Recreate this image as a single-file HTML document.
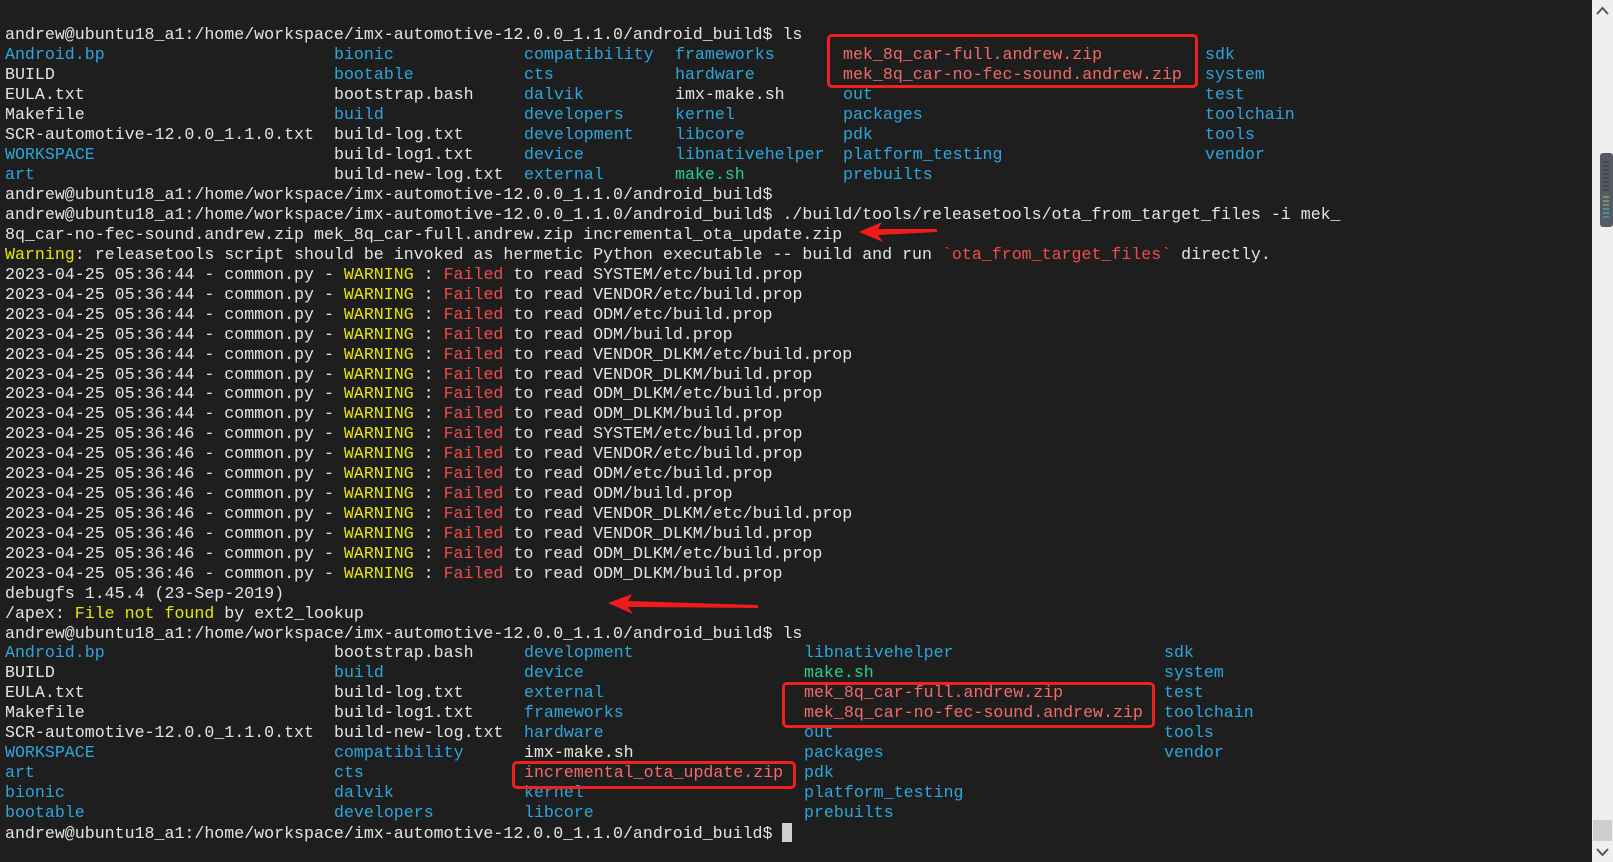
<!DOCTYPE html>
<html><head><meta charset="utf-8"><style>
html,body{margin:0;padding:0;}
body{width:1613px;height:862px;background:#1e1e1e;position:relative;overflow:hidden;font-family:"Liberation Mono",monospace;font-size:16.62px;color:#e4e4e4;}
.l{position:absolute;left:5px;height:20px;line-height:20px;white-space:pre;}
.s{position:absolute;top:0;white-space:pre;}
.b{color:#2ca6dc}.g{color:#23d18b}.y{color:#e5e510}.r{color:#f14c4c}.z{color:#f26b6b}
.box{position:absolute;border:3px solid #f02020;border-radius:5px;box-sizing:border-box;}
#sb{position:absolute;left:1592px;top:0;width:21px;height:862px;background:#efefef;}
</style></head><body>
<div class="l" style="top:25px">andrew@ubuntu18_a1:/home/workspace/imx-automotive-12.0.0_1.1.0/android_build$ ls</div>

<div class="l" style="top:45px;left:0;width:1590px"><span class="s b" style="left:5px">Android.bp</span><span class="s b" style="left:334px">bionic</span><span class="s b" style="left:524px">compatibility</span><span class="s b" style="left:675px">frameworks</span><span class="s z" style="left:843px">mek_8q_car-full.andrew.zip</span><span class="s b" style="left:1205px">sdk</span></div>
<div class="l" style="top:65px;left:0;width:1590px"><span class="s" style="left:5px">BUILD</span><span class="s b" style="left:334px">bootable</span><span class="s b" style="left:524px">cts</span><span class="s b" style="left:675px">hardware</span><span class="s z" style="left:843px">mek_8q_car-no-fec-sound.andrew.zip</span><span class="s b" style="left:1205px">system</span></div>
<div class="l" style="top:85px;left:0;width:1590px"><span class="s" style="left:5px">EULA.txt</span><span class="s" style="left:334px">bootstrap.bash</span><span class="s b" style="left:524px">dalvik</span><span class="s" style="left:675px">imx-make.sh</span><span class="s b" style="left:843px">out</span><span class="s b" style="left:1205px">test</span></div>
<div class="l" style="top:105px;left:0;width:1590px"><span class="s" style="left:5px">Makefile</span><span class="s b" style="left:334px">build</span><span class="s b" style="left:524px">developers</span><span class="s b" style="left:675px">kernel</span><span class="s b" style="left:843px">packages</span><span class="s b" style="left:1205px">toolchain</span></div>
<div class="l" style="top:125px;left:0;width:1590px"><span class="s" style="left:5px">SCR-automotive-12.0.0_1.1.0.txt</span><span class="s" style="left:334px">build-log.txt</span><span class="s b" style="left:524px">development</span><span class="s b" style="left:675px">libcore</span><span class="s b" style="left:843px">pdk</span><span class="s b" style="left:1205px">tools</span></div>
<div class="l" style="top:145px;left:0;width:1590px"><span class="s b" style="left:5px">WORKSPACE</span><span class="s" style="left:334px">build-log1.txt</span><span class="s b" style="left:524px">device</span><span class="s b" style="left:675px">libnativehelper</span><span class="s b" style="left:843px">platform_testing</span><span class="s b" style="left:1205px">vendor</span></div>
<div class="l" style="top:165px;left:0;width:1590px"><span class="s b" style="left:5px">art</span><span class="s" style="left:334px">build-new-log.txt</span><span class="s b" style="left:524px">external</span><span class="s g" style="left:675px">make.sh</span><span class="s b" style="left:843px">prebuilts</span></div>

<div class="l" style="top:185px">andrew@ubuntu18_a1:/home/workspace/imx-automotive-12.0.0_1.1.0/android_build$</div>
<div class="l" style="top:205px">andrew@ubuntu18_a1:/home/workspace/imx-automotive-12.0.0_1.1.0/android_build$ ./build/tools/releasetools/ota_from_target_files -i mek_</div>
<div class="l" style="top:225px">8q_car-no-fec-sound.andrew.zip mek_8q_car-full.andrew.zip incremental_ota_update.zip</div>
<div class="l" style="top:245px"><span class="y">Warning</span>: releasetools script should be invoked as hermetic Python executable -- build and run <span class="r">`ota_from_target_files`</span> directly.</div>
<div class="l" style="top:264.5px">2023-04-25 05:36:44 - common.py - <span class="y">WARNING</span> : <span class="r">Failed</span> to read SYSTEM/etc/build.prop</div>
<div class="l" style="top:284.5px">2023-04-25 05:36:44 - common.py - <span class="y">WARNING</span> : <span class="r">Failed</span> to read VENDOR/etc/build.prop</div>
<div class="l" style="top:304.5px">2023-04-25 05:36:44 - common.py - <span class="y">WARNING</span> : <span class="r">Failed</span> to read ODM/etc/build.prop</div>
<div class="l" style="top:324.5px">2023-04-25 05:36:44 - common.py - <span class="y">WARNING</span> : <span class="r">Failed</span> to read ODM/build.prop</div>
<div class="l" style="top:344.5px">2023-04-25 05:36:44 - common.py - <span class="y">WARNING</span> : <span class="r">Failed</span> to read VENDOR_DLKM/etc/build.prop</div>
<div class="l" style="top:364.5px">2023-04-25 05:36:44 - common.py - <span class="y">WARNING</span> : <span class="r">Failed</span> to read VENDOR_DLKM/build.prop</div>
<div class="l" style="top:384px">2023-04-25 05:36:44 - common.py - <span class="y">WARNING</span> : <span class="r">Failed</span> to read ODM_DLKM/etc/build.prop</div>
<div class="l" style="top:404px">2023-04-25 05:36:44 - common.py - <span class="y">WARNING</span> : <span class="r">Failed</span> to read ODM_DLKM/build.prop</div>
<div class="l" style="top:424px">2023-04-25 05:36:46 - common.py - <span class="y">WARNING</span> : <span class="r">Failed</span> to read SYSTEM/etc/build.prop</div>
<div class="l" style="top:444px">2023-04-25 05:36:46 - common.py - <span class="y">WARNING</span> : <span class="r">Failed</span> to read VENDOR/etc/build.prop</div>
<div class="l" style="top:464px">2023-04-25 05:36:46 - common.py - <span class="y">WARNING</span> : <span class="r">Failed</span> to read ODM/etc/build.prop</div>
<div class="l" style="top:484px">2023-04-25 05:36:46 - common.py - <span class="y">WARNING</span> : <span class="r">Failed</span> to read ODM/build.prop</div>
<div class="l" style="top:503.5px">2023-04-25 05:36:46 - common.py - <span class="y">WARNING</span> : <span class="r">Failed</span> to read VENDOR_DLKM/etc/build.prop</div>
<div class="l" style="top:523.5px">2023-04-25 05:36:46 - common.py - <span class="y">WARNING</span> : <span class="r">Failed</span> to read VENDOR_DLKM/build.prop</div>
<div class="l" style="top:543.5px">2023-04-25 05:36:46 - common.py - <span class="y">WARNING</span> : <span class="r">Failed</span> to read ODM_DLKM/etc/build.prop</div>
<div class="l" style="top:563.5px">2023-04-25 05:36:46 - common.py - <span class="y">WARNING</span> : <span class="r">Failed</span> to read ODM_DLKM/build.prop</div>
<div class="l" style="top:583.5px">debugfs 1.45.4 (23-Sep-2019)</div>
<div class="l" style="top:603.5px">/apex: <span class="y">File not found</span> by ext2_lookup</div>
<div class="l" style="top:623.5px">andrew@ubuntu18_a1:/home/workspace/imx-automotive-12.0.0_1.1.0/android_build$ ls</div>

<div class="l" style="top:643px;left:0;width:1590px"><span class="s b" style="left:5px">Android.bp</span><span class="s" style="left:334px">bootstrap.bash</span><span class="s b" style="left:524px">development</span><span class="s b" style="left:804px">libnativehelper</span><span class="s b" style="left:1164px">sdk</span></div>
<div class="l" style="top:663px;left:0;width:1590px"><span class="s" style="left:5px">BUILD</span><span class="s b" style="left:334px">build</span><span class="s b" style="left:524px">device</span><span class="s g" style="left:804px">make.sh</span><span class="s b" style="left:1164px">system</span></div>
<div class="l" style="top:683px;left:0;width:1590px"><span class="s" style="left:5px">EULA.txt</span><span class="s" style="left:334px">build-log.txt</span><span class="s b" style="left:524px">external</span><span class="s z" style="left:804px">mek_8q_car-full.andrew.zip</span><span class="s b" style="left:1164px">test</span></div>
<div class="l" style="top:703px;left:0;width:1590px"><span class="s" style="left:5px">Makefile</span><span class="s" style="left:334px">build-log1.txt</span><span class="s b" style="left:524px">frameworks</span><span class="s z" style="left:804px">mek_8q_car-no-fec-sound.andrew.zip</span><span class="s b" style="left:1164px">toolchain</span></div>
<div class="l" style="top:723px;left:0;width:1590px"><span class="s" style="left:5px">SCR-automotive-12.0.0_1.1.0.txt</span><span class="s" style="left:334px">build-new-log.txt</span><span class="s b" style="left:524px">hardware</span><span class="s b" style="left:804px">out</span><span class="s b" style="left:1164px">tools</span></div>
<div class="l" style="top:742.5px;left:0;width:1590px"><span class="s b" style="left:5px">WORKSPACE</span><span class="s b" style="left:334px">compatibility</span><span class="s" style="left:524px">imx-make.sh</span><span class="s b" style="left:804px">packages</span><span class="s b" style="left:1164px">vendor</span></div>
<div class="l" style="top:762.5px;left:0;width:1590px"><span class="s b" style="left:5px">art</span><span class="s b" style="left:334px">cts</span><span class="s z" style="left:524px">incremental_ota_update.zip</span><span class="s b" style="left:804px">pdk</span></div>
<div class="l" style="top:782.5px;left:0;width:1590px"><span class="s b" style="left:5px">bionic</span><span class="s b" style="left:334px">dalvik</span><span class="s b" style="left:524px">kernel</span><span class="s b" style="left:804px">platform_testing</span></div>
<div class="l" style="top:802.5px;left:0;width:1590px"><span class="s b" style="left:5px">bootable</span><span class="s b" style="left:334px">developers</span><span class="s b" style="left:524px">libcore</span><span class="s b" style="left:804px">prebuilts</span></div>
<div class="l" style="top:822.5px">andrew@ubuntu18_a1:/home/workspace/imx-automotive-12.0.0_1.1.0/android_build$ <span style="background:#cfcfcf;display:inline-block;width:10px;height:19px;vertical-align:-4px"></span></div>

<div class="box" style="left:827px;top:34px;width:371px;height:54px"></div>
<div class="box" style="left:782px;top:682px;width:373px;height:46px"></div>
<div class="box" style="left:512px;top:761px;width:284px;height:28px"></div>

<svg style="position:absolute;left:0;top:0" width="1613" height="862">
<polygon fill="#f01c1c" points="859,232 882,222 878,229 937,229 937,232 878,235 883,242"/>
<polygon fill="#f01c1c" points="608,603 632,594 628,601 758,605 758,608 628,607 633,614"/>
</svg>

<div id="sb">
<svg width="21" height="862" style="position:absolute;left:0;top:0">
<polyline points="5,14 10.5,8 16,14" fill="none" stroke="#555" stroke-width="2"/>
<rect x="8" y="153" width="13" height="74" rx="3" fill="#555a66"/>
<g stroke-width="1">
<line x1="11" x2="17" y1="162" y2="162" stroke="#333"/>
<line x1="11" x2="17" y1="166" y2="166" stroke="#333"/>
<line x1="11" x2="17" y1="170" y2="170" stroke="#333"/>
<line x1="11" x2="17" y1="174" y2="174" stroke="#333"/>
<line x1="11" x2="17" y1="178" y2="178" stroke="#333"/>
<line x1="11" x2="17" y1="182" y2="182" stroke="#333"/>
<line x1="11" x2="17" y1="186" y2="186" stroke="#333"/>
<line x1="11" x2="17" y1="190" y2="190" stroke="#333"/>
<line x1="11" x2="17" y1="197" y2="197" stroke="#9acd5a"/>
<line x1="11" x2="17" y1="201" y2="201" stroke="#8fd06a"/>
<line x1="11" x2="17" y1="205" y2="205" stroke="#70c880"/>
<line x1="11" x2="17" y1="209" y2="209" stroke="#5cc690"/>
<line x1="11" x2="17" y1="213" y2="213" stroke="#4ac4a0"/>
<line x1="11" x2="17" y1="217" y2="217" stroke="#40c0b0"/>
</g>
<rect x="1" y="820" width="19" height="21" fill="#cdcdcd"/>
<polyline points="5,849 10.5,855 16,849" fill="none" stroke="#555" stroke-width="2"/>
</svg>
</div>
</body></html>
